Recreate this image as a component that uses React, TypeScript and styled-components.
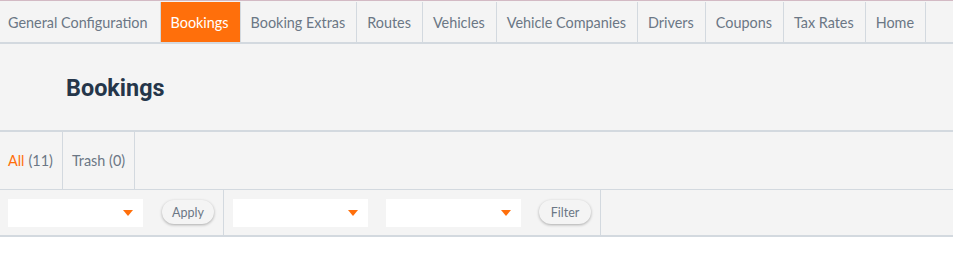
import styled, { createGlobalStyle } from 'styled-components'

const GlobalStyle = createGlobalStyle`
	body {
		margin: 0;
		background: #ffffff;
		font-family: 'Lato', 'Liberation Sans', sans-serif;
	}
`

const Page = styled.div`
	border-top: 1px solid #d3bac4;
`

const NavBar = styled.nav`
	display: flex;
	height: 43px;
	padding-top: 1px;
	box-sizing: border-box;
	background: #f4f4f4;
	border-bottom: 2px solid #d3d9df;
`

const NavTab = styled.a<{ $active?: boolean }>`
	display: flex;
	align-items: center;
	padding: 0 11px 0 10px;
	font-size: 14.4px;
	color: ${(p) => (p.$active ? '#ffffff' : '#6b7785')};
	background: ${(p) => (p.$active ? '#ff6f0b' : 'transparent')};
	border-right: 1px solid #d3d9df;
	white-space: nowrap;
	cursor: pointer;

	&:first-child {
		padding-left: 8px;
		padding-right: 12px;
	}
`

const Header = styled.header`
	display: flex;
	align-items: center;
	height: 86px;
	padding-left: 66px;
	background: #f4f4f4;
	border-bottom: 2px solid #d3d9df;
`

const Title = styled.h1`
	margin: 0;
	padding-top: 2px;
	font-family: 'Roboto', 'Liberation Sans', sans-serif;
	font-size: 23.4px;
	font-weight: 700;
	color: #25364a;
`

const SubTabs = styled.div`
	display: flex;
	height: 57px;
	background: #f4f4f4;
	border-bottom: 1px solid #d3d9df;
`

const SubTab = styled.a`
	display: flex;
	align-items: center;
	padding: 0 9px;
	font-size: 14.4px;
	color: #6b7785;
	border-right: 1px solid #d3d9df;
	cursor: pointer;

	&:first-child {
		padding-left: 8px;
	}
`

const Current = styled.span`
	color: #ff6f0b;
	margin-right: 4px;
`

const FilterRow = styled.div`
	display: flex;
	height: 45px;
	background: #f4f4f4;
	border-bottom: 2px solid #d3d9df;
`

const FilterGroup = styled.div<{ $gap: number }>`
	display: flex;
	align-items: center;
	gap: ${(p) => p.$gap}px;
	padding: 0 9px;
	border-right: 1px solid #d3d9df;

	&:first-child {
		padding-left: 8px;
	}
`

const Select = styled.div`
	position: relative;
	width: 135px;
	height: 28px;
	background: #ffffff;

	&::after {
		content: '';
		position: absolute;
		right: 10px;
		top: 11px;
		border-left: 5px solid transparent;
		border-right: 5px solid transparent;
		border-top: 6px solid #ff6f0b;
	}
`

const PillButton = styled.button`
	height: 24px;
	margin-bottom: 1px;
	padding: 0 10px;
	min-width: 52px;
	border: none;
	border-radius: 12px;
	background: #f4f4f4;
	box-shadow: 0 1px 3px rgba(0, 0, 0, 0.3);
	font-family: 'Lato', 'Liberation Sans', sans-serif;
	font-size: 12.5px;
	color: #6b7785;
	cursor: pointer;
`

const tabs = [
	'General Configuration',
	'Bookings',
	'Booking Extras',
	'Routes',
	'Vehicles',
	'Vehicle Companies',
	'Drivers',
	'Coupons',
	'Tax Rates',
	'Home',
]

export default function App() {
	return (
		<Page>
			<GlobalStyle />
			<NavBar>
				{tabs.map((tab) => (
					<NavTab key={tab} $active={tab === 'Bookings'}>
						{tab}
					</NavTab>
				))}
			</NavBar>
			<Header>
				<Title>Bookings</Title>
			</Header>
			<SubTabs>
				<SubTab>
					<Current>All</Current>(11)
				</SubTab>
				<SubTab>Trash (0)</SubTab>
			</SubTabs>
			<FilterRow>
				<FilterGroup $gap={19}>
					<Select />
					<PillButton>Apply</PillButton>
				</FilterGroup>
				<FilterGroup $gap={18}>
					<Select />
					<Select />
					<PillButton>Filter</PillButton>
				</FilterGroup>
			</FilterRow>
		</Page>
	)
}
